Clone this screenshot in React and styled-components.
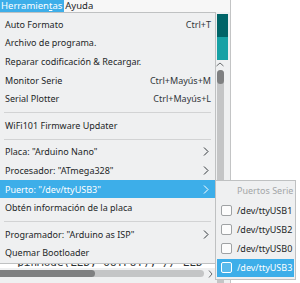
import React from "react";
import styled, { createGlobalStyle } from "styled-components";

const GlobalStyle = createGlobalStyle`
  html, body {
    margin: 0;
    padding: 0;
    background: #ffffff;
  }
  body {
    font-family: "Noto Sans", "DejaVu Sans", sans-serif;
    font-size: 9px;
    color: #232627;
  }
`;

const Screen = styled.div`
  display: flex;
  width: 300px;
  height: 283px;
  overflow: hidden;
`;

const IdeWindow = styled.div`
  position: relative;
  flex: none;
  width: 230px;
  display: flex;
  flex-direction: column;
  background: #eff0f1;
  border-right: 1px solid #c3c4c5;
`;

const Desktop = styled.div`
  flex: 1;
  background: #ffffff;
`;

const MenuBar = styled.div`
  height: 12px;
  display: flex;
  align-items: stretch;
  background: #f7f7f7;
`;

const MenuTitle = styled.div`
  display: flex;
  align-items: center;
  padding: 0 2px 0 1px;
  background: ${(p) => (p.$active ? "#3daee9" : "transparent")};
  color: ${(p) => (p.$active ? "#ffffff" : "#232627")};
  line-height: 12px;
  font-size: 9.5px;
`;

const Accel = styled.span`
  text-decoration: underline;
`;

const Body = styled.div`
  flex: 1;
  display: flex;
  min-height: 0;
`;

const EditorColumn = styled.div`
  flex: 1;
  min-width: 0;
  display: flex;
  flex-direction: column;
`;

const Editor = styled.div`
  flex: 1;
  min-width: 0;
  background: #ffffff;
  overflow: hidden;
  display: flex;
  flex-direction: column;
  justify-content: flex-end;
  font-family: "DejaVu Sans Mono", monospace;
  font-size: 11px;
  line-height: 9px;
  color: #2b2f31;
  padding: 0 0 1px 4px;
`;

const CodeLine = styled.div`
  white-space: pre;
  overflow: hidden;
`;

const HScrollRow = styled.div`
  height: 15px;
  display: flex;
  align-items: flex-start;
  padding-top: 2px;
  box-sizing: border-box;
`;

const HTrack = styled.div`
  width: 204px;
  height: 7px;
  background: #c4c5c6;
  border-radius: 0 4px 4px 0;
  display: flex;
`;

const HThumb = styled.div`
  height: 7px;
  background: #7f8081;
  border-radius: 0 4px 4px 0;
`;

const ArrowBox = styled.div`
  width: 12px;
  height: 8px;
  display: flex;
  align-items: center;
  justify-content: center;
`;

const SideColumn = styled.div`
  flex: none;
  width: 14px;
  display: flex;
  flex-direction: column;
  padding-top: 2px;
`;

const TealBlock = styled.div`
  width: 11px;
  height: 23px;
  margin-left: 1px;
  background: ${(p) => (p.$dark ? "#006468" : "#17a1a5")};
`;

const VScroll = styled.div`
  flex: 1;
  width: 8px;
  display: flex;
  flex-direction: column;
  align-items: center;
`;

const VTrack = styled.div`
  flex: 1;
  width: 7px;
  margin-top: 2px;
  background: #c4c5c6;
  border-radius: 4px 4px 0 0;
`;

const VThumb = styled.div`
  width: 7px;
  height: 14px;
  background: #7f8081;
  border-radius: 4px;
`;

const Menu = styled.div`
  position: absolute;
  top: 12px;
  left: 0;
  width: 216px;
  box-sizing: border-box;
  padding: 2px 0 1px;
  background: #eff0f1;
  border: 1px solid #bfc1c2;
  border-left: none;
`;

const Item = styled.div`
  position: relative;
  height: 18.6px;
  display: flex;
  align-items: center;
  padding: 0 4px 0 5px;
  background: ${(p) => (p.$active ? "#3daee9" : "transparent")};
  color: ${(p) => (p.$active ? "#ffffff" : "#232627")};
  white-space: nowrap;
`;

const Label = styled.span`
  flex: 1;
`;

const Shortcut = styled.span`
  color: #31363b;
`;

const Separator = styled.div`
  height: 1px;
  margin: 4px 4px 3px;
  background: #d2d3d4;
`;

const SubMenu = styled.div`
  position: absolute;
  top: 0;
  left: 100%;
  width: 81px;
  box-sizing: border-box;
  padding: 0 1px 1px;
  background: #eff0f1;
  border: 1px solid #bfc1c2;
  color: #232627;
`;

const SubHeader = styled.div`
  height: 20px;
  display: flex;
  align-items: center;
  padding-left: 20px;
  color: #a3a6a8;
`;

const SubItem = styled.div`
  height: 18px;
  margin: 1px 0;
  display: flex;
  align-items: center;
  gap: 5px;
  padding-left: 4px;
  background: ${(p) => (p.$active ? "#3daee9" : "transparent")};
  color: ${(p) => (p.$active ? "#ffffff" : "#232627")};
`;

const CheckBox = styled.span`
  width: 9px;
  height: 9px;
  border: 1px solid ${(p) => (p.$active ? "#ffffff" : "#9fa2a4")};
  border-radius: 2px;
  background: ${(p) => (p.$active ? "rgba(255,255,255,0.15)" : "#fcfcfc")};
`;

const Chevron = ({ color = "#31363b" }) => (
  <svg width="6" height="9" viewBox="0 0 6 9" style={{ marginRight: 2 }}>
    <path d="M1 0.5 L5 4.5 L1 8.5" fill="none" stroke={color} strokeWidth="1" />
  </svg>
);

const ports = ["/dev/ttyUSB1", "/dev/ttyUSB2", "/dev/ttyUSB0", "/dev/ttyUSB3"];

export default function App() {
  return (
    <>
      <GlobalStyle />
      <Screen>
        <IdeWindow>
          <MenuBar>
            <MenuTitle $active>
              Herramien<Accel>t</Accel>as
            </MenuTitle>
            <MenuTitle>Ayuda</MenuTitle>
          </MenuBar>
          <Body>
            <EditorColumn>
              <Editor>
                <CodeLine>  pinMode(LED, OUTPUT); // LED</CodeLine>
              </Editor>
              <HScrollRow>
                <HTrack>
                  <HThumb style={{ width: 95 }} />
                </HTrack>
                <ArrowBox>
                  <svg width="5" height="8" viewBox="0 0 5 8">
                    <path d="M1 0.5 L4 4 L1 7.5" fill="none" stroke="#6b6e70" strokeWidth="1" />
                  </svg>
                </ArrowBox>
              </HScrollRow>
            </EditorColumn>
            <SideColumn>
              <TealBlock $dark />
              <TealBlock />
              <VScroll>
                <ArrowBox>
                  <svg width="8" height="5" viewBox="0 0 8 5">
                    <path d="M0.5 4 L4 1 L7.5 4" fill="none" stroke="#6b6e70" strokeWidth="1" />
                  </svg>
                </ArrowBox>
                <VTrack>
                  <VThumb />
                </VTrack>
              </VScroll>
            </SideColumn>
          </Body>

          <Menu>
            <Item>
              <Label>Auto Formato</Label>
              <Shortcut>Ctrl+T</Shortcut>
            </Item>
            <Item>
              <Label>Archivo de programa.</Label>
            </Item>
            <Item>
              <Label>Reparar codificación &amp; Recargar.</Label>
            </Item>
            <Item>
              <Label>Monitor Serie</Label>
              <Shortcut>Ctrl+Mayús+M</Shortcut>
            </Item>
            <Item>
              <Label>Serial Plotter</Label>
              <Shortcut>Ctrl+Mayús+L</Shortcut>
            </Item>
            <Separator />
            <Item>
              <Label>WiFi101 Firmware Updater</Label>
            </Item>
            <Separator />
            <Item>
              <Label>Placa: "Arduino Nano"</Label>
              <Chevron />
            </Item>
            <Item>
              <Label>Procesador: "ATmega328"</Label>
              <Chevron />
            </Item>
            <Item $active>
              <Label>Puerto: "/dev/ttyUSB3"</Label>
              <Chevron color="#ffffff" />
              <SubMenu>
                <SubHeader>Puertos Serie</SubHeader>
                {ports.map((p, i) => (
                  <SubItem key={p} $active={i === ports.length - 1}>
                    <CheckBox $active={i === ports.length - 1} />
                    {p}
                  </SubItem>
                ))}
              </SubMenu>
            </Item>
            <Item>
              <Label>Obtén información de la placa</Label>
            </Item>
            <Separator />
            <Item>
              <Label>Programador: "Arduino as ISP"</Label>
              <Chevron />
            </Item>
            <Item>
              <Label>Quemar Bootloader</Label>
            </Item>
          </Menu>
        </IdeWindow>
        <Desktop />
      </Screen>
    </>
  );
}
